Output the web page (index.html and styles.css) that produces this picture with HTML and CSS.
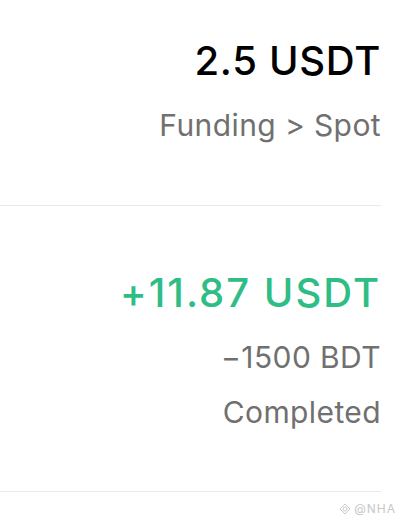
FILE: index.html
```html
<!DOCTYPE html>
<html lang="en">
<head>
<meta charset="UTF-8" />
<meta name="viewport" content="width=device-width, initial-scale=1.0"/>
<title>Transactions</title>
<link rel="stylesheet" href="styles.css">
</head>
<body>
<div class="list">
    <div class="record first">
        <div class="amount">2.5 USDT</div>
        <div class="sub">Funding &gt; Spot</div>
    </div>
    <div class="record second">
        <div class="amount positive">+11.87 USDT</div>
        <div class="sub">−1500 BDT</div>
        <div class="sub">Completed</div>
    </div>
</div>
<div class="watermark">
    <svg width="14" height="12" viewBox="0 0 14 12">
        <path d="M7 1 L12 6 L7 11 L2 6 Z" fill="none" stroke="#ccc" stroke-width="1"/>
        <circle cx="7" cy="6" r="2" fill="none" stroke="#ccc" stroke-width="1"/>
    </svg>
    <span>@NHA</span>
</div>
</body>
</html>
```

FILE: styles.css
```css
body {
    margin: 0;
    background-color: #fff;
    font-family: Inter, 'Noto Sans', sans-serif;
    width: 402px;
    height: 524px;
    overflow: hidden;
    position: relative;
}
.list {
    padding-right: 21px;
}
.record {
    display: flex;
    flex-direction: column;
    align-items: flex-end;
    border-bottom: 1px solid #ebebeb;
}
.record.first {
    padding-top: 36px;
    padding-bottom: 52px;
}
.record.second {
    padding-top: 62px;
    padding-bottom: 51px;
}
.amount {
    font-size: 40px;
    font-weight: 500;
    letter-spacing: 0.7px;
    line-height: 50px;
    color: #000;
    margin-bottom: 12px;
}
.amount.positive {
    color: #2ebd85;
    letter-spacing: 2px;
}
.sub {
    font-size: 30px;
    letter-spacing: 0.4px;
    line-height: 55px;
    color: #707070;
}
.watermark {
    position: absolute;
    right: 6px;
    bottom: 8px;
    display: flex;
    align-items: center;
    gap: 2px;
    font-size: 12px;
    color: #c8c8c8;
    letter-spacing: 1px;
}
```
